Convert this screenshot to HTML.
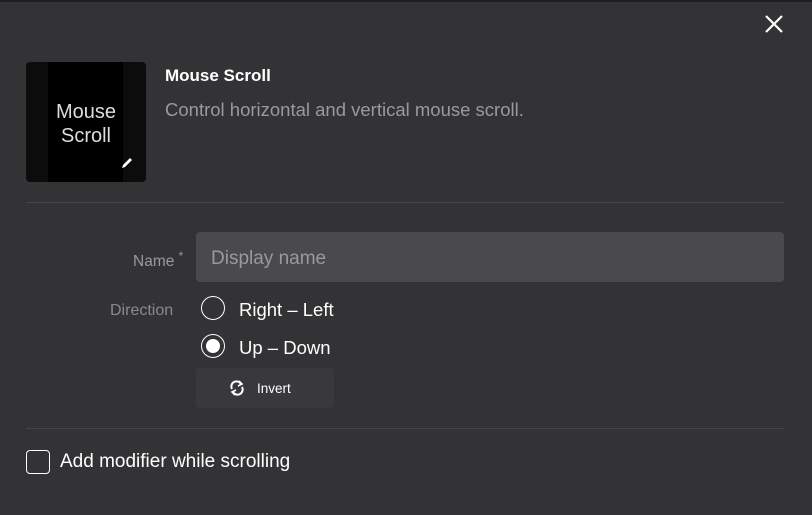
<!DOCTYPE html>
<html><head><style>
*{margin:0;padding:0;box-sizing:border-box}
body{width:812px;height:515px;background:#333335;font-family:"Liberation Sans",sans-serif;position:relative;overflow:hidden;color:#fff}
.a{position:absolute}
</style></head><body>
<div class="a" style="left:0;top:0;width:812px;height:2px;background:#1f1f21"></div>
<svg class="a" style="left:764px;top:14px" width="20" height="20"><path d="M2 2L18 18M18 2L2 18" stroke="#fff" stroke-width="2.2"/></svg>
<div class="a" style="left:26px;top:62px;width:120px;height:120px;background:#0c0c0c;border-radius:4px;overflow:hidden">
<div class="a" style="left:22px;top:0;width:75px;height:120px;background:#000"></div>
<div class="a" style="left:0;top:38px;width:120px;text-align:center;font-size:20px;line-height:24px;color:#ddd">Mouse<br>Scroll</div>
<svg class="a" style="left:94px;top:94px" width="14" height="14"><path d="M2 12L3 9L10 2L12 4L5 11Z" fill="#fff"/></svg>
</div>
<div class="a" style="left:165px;top:66px;font-size:17px;font-weight:bold">Mouse Scroll</div>
<div class="a" style="left:165px;top:99px;font-size:18.5px;color:#9a9a9c">Control horizontal and vertical mouse scroll.</div>
<div class="a" style="left:26px;top:202px;width:758px;height:1px;background:#464648"></div>
<div class="a" style="left:133px;top:249px;font-size:15.5px;color:#9a9a9c">Name <sup style="font-size:12px">*</sup></div>
<div class="a" style="left:196px;top:232px;width:588px;height:50px;background:#4a494b;border-radius:4px"></div>
<div class="a" style="left:211px;top:248px;font-size:19px;color:#9a9a9c">Display name</div>
<div class="a" style="left:110px;top:302px;font-size:16px;color:#8a8a8c">Direction</div>
<div class="a" style="left:201px;top:296px;width:24px;height:24px;border:1.5px solid #fff;border-radius:50%"></div>
<div class="a" style="left:239px;top:299px;font-size:18.5px">Right – Left</div>
<div class="a" style="left:201px;top:334px;width:24px;height:24px;border:1.5px solid #fff;border-radius:50%"><div style="margin:3.5px;width:14px;height:14px;background:#fff;border-radius:50%"></div></div>
<div class="a" style="left:239px;top:337px;font-size:18.5px">Up – Down</div>
<div class="a" style="left:196px;top:368px;width:138px;height:40px;background:#39393b;border-radius:4px"></div>
<svg class="a" style="left:228px;top:379px" width="18" height="18" fill="none" stroke="#fff" stroke-width="2"><path d="M4 10A5 5 0 0 1 13 5M14 8A5 5 0 0 1 5 13"/><path d="M11 2L14 5L10 7M7 16L4 13L8 11" stroke-width="1.6"/></svg>
<div class="a" style="left:257px;top:381px;font-size:13.5px">Invert</div>
<div class="a" style="left:26px;top:428px;width:758px;height:1px;background:#464648"></div>
<div class="a" style="left:26px;top:450px;width:24px;height:24px;border:1.5px solid #fff;border-radius:4px"></div>
<div class="a" style="left:60px;top:451px;font-size:19px">Add modifier while scrolling</div>
</body></html>
